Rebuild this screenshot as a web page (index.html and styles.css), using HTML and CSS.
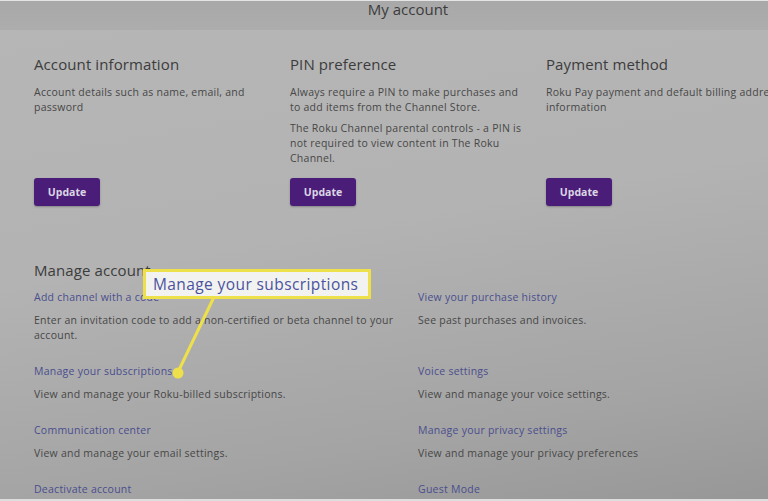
FILE: index.html
```html
<!DOCTYPE html>
<html lang="en">
<head>
<meta charset="utf-8">
<title>My account</title>
<link rel="stylesheet" href="styles.css">
</head>
<body>
<div class="page">
  <header class="topbar"><h1 class="title">My account</h1></header>
  <main class="content">
    <section class="cards">
      <div class="card">
        <h2 class="card-title">Account information</h2>
        <p class="desc">Account details such as name, email, and password</p>
        <button class="btn">Update</button>
      </div>
      <div class="card">
        <h2 class="card-title">PIN preference</h2>
        <p class="desc">Always require a PIN to make purchases and to add items from the Channel Store.</p>
        <p class="desc">The Roku Channel parental controls - a PIN is not required to view content in The Roku Channel.</p>
        <button class="btn">Update</button>
      </div>
      <div class="card card-wide">
        <h2 class="card-title">Payment method</h2>
        <p class="desc">Roku Pay payment and default billing address information</p>
        <button class="btn">Update</button>
      </div>
    </section>
    <section class="manage">
      <h2 class="card-title">Manage account</h2>
      <div class="items">
        <div class="item"><a class="link">Add channel with a code</a><p class="desc">Enter an invitation code to add a non-certified or beta channel to your account.</p></div>
        <div class="item"><a class="link">View your purchase history</a><p class="desc">See past purchases and invoices.</p></div>
        <div class="item"><a class="link">Manage your subscriptions</a><p class="desc">View and manage your Roku-billed subscriptions.</p></div>
        <div class="item"><a class="link">Voice settings</a><p class="desc">View and manage your voice settings.</p></div>
        <div class="item"><a class="link">Communication center</a><p class="desc">View and manage your email settings.</p></div>
        <div class="item"><a class="link">Manage your privacy settings</a><p class="desc">View and manage your privacy preferences</p></div>
        <div class="item"><a class="link">Deactivate account</a></div>
        <div class="item"><a class="link">Guest Mode</a></div>
      </div>
    </section>
  </main>
  <div class="bottom-line"></div>

  <svg class="pointer" width="768" height="501" viewBox="0 0 768 501">
    <line x1="214" y1="296" x2="178" y2="371" stroke="#eee04a" stroke-width="3" stroke-linecap="round"/>
    <circle cx="178" cy="372" r="5.5" fill="#eee04a"/>
  </svg>
  <div class="callout">Manage your subscriptions</div>
</div>
</body>
</html>
```
FILE: styles.css
```css
* { box-sizing: border-box; }
html, body { margin: 0; padding: 0; }
body {
  font-family: "Open Sans", "DejaVu Sans", sans-serif;
  color: #404040;
}
.page {
  position: relative;
  width: 768px;
  height: 501px;
  overflow: hidden;
  display: flex;
  flex-direction: column;
  border-top: 1px solid #e4e4e4;
  background: linear-gradient(170deg, #b6b6b6 0%, #b3b3b3 45%, #a4a4a4 80%, #979797 100%);
}
.topbar {
  height: 29px;
  flex: none;
  background: linear-gradient(#a8a8a8, #adadad);
  display: flex;
  justify-content: center;
}
.title {
  margin: 0;
  padding-left: 48px;
  font-size: 15px;
  font-weight: 400;
  line-height: 16px;
  color: #3c3c3c;
}
.content {
  flex: 1;
  padding: 24px 0 0 34px;
  overflow: hidden;
}
.cards {
  display: grid;
  grid-template-columns: 232px 232px 270px;
  column-gap: 24px;
  width: 1000px;
}
.card {
  display: flex;
  flex-direction: column;
  align-items: flex-start;
  min-height: 152px;
}
.card-title {
  margin: 0;
  font-size: 15px;
  font-weight: 400;
  line-height: 20px;
  color: #3c3c3c;
  letter-spacing: 0.1px;
}
.desc {
  margin: 6px 0 0;
  font-size: 10.5px;
  line-height: 15px;
  color: #474747;
  letter-spacing: 0.25px;
}
.card-title + .desc { margin-top: 11px; }
.btn {
  margin-top: auto;
  width: 66px;
  height: 28px;
  border: none;
  border-radius: 3px;
  background: #4a1d78;
  color: #dcd6e4;
  font-family: inherit;
  font-size: 10.5px;
  font-weight: 700;
  box-shadow: 0 1px 2px rgba(0,0,0,0.25);
}
.manage {
  margin-top: 54px;
}
.items {
  margin-top: 10px;
  display: grid;
  grid-template-columns: 364px 360px;
  column-gap: 20px;
}
.item {
  display: flex;
  flex-direction: column;
  padding-bottom: 21px;
}
.link {
  font-size: 10.5px;
  line-height: 15px;
  color: #4a4e8e;
  letter-spacing: 0.25px;
}
.item .desc { margin-top: 8px; }
.bottom-line {
  flex: none;
  height: 2px;
  background: #dedede;
}
.pointer {
  position: absolute;
  left: 0;
  top: 0;
  pointer-events: none;
}
.callout {
  position: absolute;
  left: 143px;
  top: 268px;
  width: 228px;
  height: 30px;
  border: 3px solid #eee04a;
  background: #f2f2f0;
  color: #4a52a0;
  font-size: 15.5px;
  line-height: 24px;
  padding-left: 7px;
  letter-spacing: 0.4px;
  white-space: nowrap;
}
```
